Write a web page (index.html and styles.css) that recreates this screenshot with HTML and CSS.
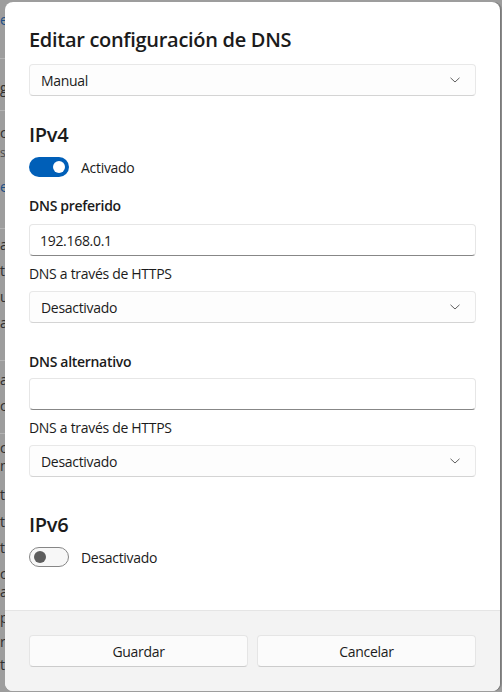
FILE: index.html
```html
<!DOCTYPE html>
<html lang="es">
<head>
<meta charset="utf-8">
<title>Editar configuración de DNS</title>
<link rel="stylesheet" href="styles.css">
</head>
<body>
<div class="backdrop" aria-hidden="true">
  <div class="bk-row blue">e</div>
  <div class="bk-sep"></div>
  <div class="bk-row">g</div>
  <div class="bk-sep"></div>
  <div class="bk-row">ci</div>
  <div class="bk-row small">s</div>
  <div class="bk-row blue">e</div>
  <div class="bk-sep"></div>
  <div class="bk-row">a</div>
  <div class="bk-row">ti</div>
  <div class="bk-row">u</div>
  <div class="bk-row">a</div>
  <div class="bk-sep"></div>
  <div class="bk-row">a</div>
  <div class="bk-row">c</div>
  <div class="bk-sep"></div>
  <div class="bk-row">c</div>
  <div class="bk-row">m</div>
  <div class="bk-row">ti</div>
  <div class="bk-row">ti</div>
  <div class="bk-row">ti</div>
  <div class="bk-row">c</div>
  <div class="bk-row">a</div>
  <div class="bk-row">p</div>
  <div class="bk-row">r</div>
  <div class="bk-row">ti</div>
</div>

<div class="dialog" role="dialog" aria-label="Editar configuración de DNS">
  <div class="dlg-body">
    <h1 class="title">Editar configuración de DNS</h1>
    <div class="combo combo-top">
      <span>Manual</span>
      <svg class="chev" width="10" height="6" viewBox="0 0 10 6"><path d="M0.5 0.8 L5 5 L9.5 0.8" fill="none" stroke="#5f5f5f" stroke-width="1"/></svg>
    </div>

    <h2 class="section">IPv4</h2>
    <div class="toggle-row">
      <span class="toggle on"><span class="knob"></span></span>
      <span class="toggle-label">Activado</span>
    </div>

    <div class="field-label strong first">DNS preferido</div>
    <div class="input">192.168.0.1</div>
    <div class="field-label">DNS a través de HTTPS</div>
    <div class="combo">
      <span>Desactivado</span>
      <svg class="chev" width="10" height="6" viewBox="0 0 10 6"><path d="M0.5 0.8 L5 5 L9.5 0.8" fill="none" stroke="#5f5f5f" stroke-width="1"/></svg>
    </div>

    <div class="field-label strong gap">DNS alternativo</div>
    <div class="input tight"></div>
    <div class="field-label">DNS a través de HTTPS</div>
    <div class="combo">
      <span>Desactivado</span>
      <svg class="chev" width="10" height="6" viewBox="0 0 10 6"><path d="M0.5 0.8 L5 5 L9.5 0.8" fill="none" stroke="#5f5f5f" stroke-width="1"/></svg>
    </div>

    <h2 class="section section-v6">IPv6</h2>
    <div class="toggle-row">
      <span class="toggle off"><span class="knob"></span></span>
      <span class="toggle-label">Desactivado</span>
    </div>
  </div>
  <div class="dlg-footer">
    <button class="btn">Guardar</button>
    <button class="btn">Cancelar</button>
  </div>
</div>
</body>
</html>
```
FILE: styles.css
```css
* { box-sizing: border-box; }

html, body {
  margin: 0;
  padding: 0;
  width: 502px;
  height: 692px;
  overflow: hidden;
}

body {
  background: #9d9d9d;
  font-family: "Segoe UI", "Open Sans", "Noto Sans", sans-serif;
  color: #1b1b1b;
  letter-spacing: -0.3px;
  position: relative;
}

/* dimmed settings window behind the dialog */
.backdrop {
  width: 12px;
  height: 692px;
  padding-top: 10px;
  display: grid;
  grid-template-rows: 48px 20px 32px 13px 20px 34px 51px 7px 26px 26px 26px 47px 10px 26px 37px 5px 18px 29px 27px 26px 26px 18px 26px 24px 23px 37px;
  overflow: hidden;
}
.bk-row {
  padding-top: 2px;
  line-height: 16px;
  font-size: 14px;
  color: #2f2f2f;
  white-space: nowrap;
  letter-spacing: 0;
}
.bk-row.blue { color: #1d4f86; }
.bk-row.small { font-size: 12px; color: #4a4a4a; }
.bk-sep {
  height: 1px;
  background: #b3b3b3;
}

/* dialog */
.dialog {
  position: absolute;
  left: 5px;
  top: 2px;
  width: 495px;
  height: 689px;
  background: #ffffff;
  border-radius: 8px;
  overflow: hidden;
  display: flex;
  flex-direction: column;
  box-shadow: 1px 0 0 #7a7a7a, 2px 0 0 #8a8a8a;
}

.dlg-body {
  flex: 1;
  padding: 24px 24px 0;
  display: flex;
  flex-direction: column;
}

.title {
  margin: 0;
  font-size: 20px;
  line-height: 28px;
  font-weight: 600;
  color: #1b1b1b;
  letter-spacing: -0.3px;
}

.combo {
  height: 32px;
  margin-top: 7px;
  border: 1px solid #e8e8e8;
  border-bottom-color: #d4d4d4;
  border-radius: 4px;
  background: #fdfdfd;
  display: flex;
  align-items: center;
  justify-content: space-between;
  padding: 0 15px 0 11px;
  font-size: 14px;
  color: #1b1b1b;
}
.combo-top { margin-top: 10px; }
.chev { display: block; }

.section {
  margin: 25px 0 0;
  font-size: 20px;
  line-height: 28px;
  font-weight: 600;
  color: #1b1b1b;
}
.section-v6 { margin-top: 34px; }

.toggle-row {
  margin-top: 8px;
  height: 20px;
  display: flex;
  align-items: center;
  gap: 12px;
}
.toggle {
  width: 40px;
  height: 20px;
  border-radius: 10px;
  display: flex;
  align-items: center;
  flex: none;
}
.toggle.on {
  background: #005fb8;
  justify-content: flex-end;
  padding-right: 4px;
}
.toggle.off {
  border: 1px solid #868686;
  background: #f7f7f7;
  justify-content: flex-start;
  padding-left: 4px;
}
.knob {
  width: 12px;
  height: 12px;
  border-radius: 50%;
}
.toggle.on .knob { background: #ffffff; }
.toggle.off .knob { background: #5d5d5d; }
.toggle-label {
  font-size: 14px;
  color: #1b1b1b;
}

.field-label {
  margin-top: 8px;
  height: 20px;
  line-height: 20px;
  font-size: 14px;
  color: #1b1b1b;
}
.field-label.strong { font-weight: 600; }
.field-label.first { margin-top: 19px; }
.field-label.gap { margin-top: 29px; }

.input {
  margin-top: 8px;
  height: 32px;
  border: 1px solid #e6e6e6;
  border-bottom: 1px solid #878787;
  border-radius: 4px;
  background: #ffffff;
  padding: 0 10px;
  display: flex;
  align-items: center;
  font-size: 14px;
  color: #1b1b1b;
}
.input.tight { margin-top: 6px; }

.dlg-footer {
  height: 81px;
  flex: none;
  border-top: 1px solid #e5e5e5;
  background: #f3f3f3;
  padding: 24px 24px 0;
  display: grid;
  grid-template-columns: 1fr 1fr;
  column-gap: 9px;
  align-items: start;
}
.btn {
  height: 32px;
  border: 1px solid #e5e5e5;
  border-bottom-color: #cccccc;
  border-radius: 4px;
  background: #fbfbfb;
  font-family: inherit;
  font-size: 14px;
  letter-spacing: -0.3px;
  color: #1b1b1b;
}
```
